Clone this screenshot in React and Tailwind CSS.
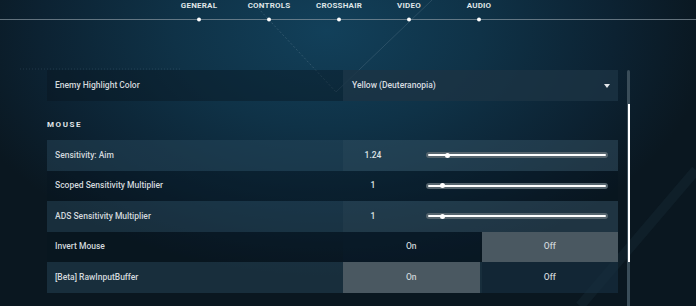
import React from "react";

const tabs = ["GENERAL", "CONTROLS", "CROSSHAIR", "VIDEO", "AUDIO"];

const Slider = ({ thumb }) => (
  <div className="relative ml-[23px] h-[6px] w-[182px] rounded-full bg-[#56656e] flex items-center px-[2px]">
    <div className="h-[2px] w-full rounded-full bg-white" />
    <div
      className="absolute top-[0.5px] size-[5px] rounded-full bg-white"
      style={{ left: thumb }}
    />
  </div>
);

const SliderRow = ({ label, value, thumb, light }) => (
  <div className={`flex h-[30.5px] ${light ? "bg-[#2b4b5f]/45" : "bg-[#061420]/35"}`}>
    <div className="w-[296px] flex items-center pl-[8px] text-[#d2d8dc]">{label}</div>
    <div className={`flex-1 flex items-center ${light ? "bg-white/[0.03]" : ""}`}>
      <span className="w-[60px] text-center text-[#dde2e5]">{value}</span>
      <Slider thumb={thumb} />
    </div>
  </div>
);

const ToggleRow = ({ label, on, light }) => (
  <div className={`flex h-[30.5px] ${light ? "bg-[#2b4b5f]/45" : "bg-[#061420]/35"}`}>
    <div className="w-[296px] flex items-center pl-[8px] text-[#d2d8dc]">{label}</div>
    <div className="flex-1 flex gap-[2px]">
      <div className={`flex-1 flex items-center justify-center text-[#ccd3d7] ${on ? "bg-[#4a5861]" : "bg-[#0a1c2a]/40"}`}>
        On
      </div>
      <div className={`flex-1 flex items-center justify-center text-[#ccd3d7] ${on ? "bg-[#0a1c2a]/40" : "bg-[#4a5861]"}`}>
        Off
      </div>
    </div>
  </div>
);

export default function App() {
  return (
    <div
      className="relative w-[696px] h-[306px] overflow-hidden text-[8.5px] font-medium bg-[radial-gradient(ellipse_55%_80%_at_47%_10%,#12405a_0%,#0f3247_40%,#0c2232_75%,#0a1720_100%)]"
      style={{ fontFamily: "Roboto, 'Liberation Sans', sans-serif" }}
    >
      {/* decorative lines behind */}
      <svg className="absolute inset-0 pointer-events-none" width="696" height="306">
        <line x1="258" y1="8" x2="336" y2="92" stroke="#7f98a8" strokeOpacity="0.35" strokeDasharray="2 2" strokeWidth="0.8" />
        <line x1="432" y1="0" x2="336" y2="92" stroke="#7f98a8" strokeOpacity="0.3" strokeWidth="0.8" />
        <line x1="20" y1="69" x2="180" y2="69" stroke="#7f98a8" strokeOpacity="0.25" strokeDasharray="1 2" strokeWidth="0.8" />
        <line x1="580" y1="306" x2="696" y2="170" stroke="#3d5b6d" strokeOpacity="0.12" strokeWidth="10" />
      </svg>

      <div className="relative flex h-[20px] border-b border-[#8796a0]/70 pl-[164px]">
        {tabs.map((t) => (
          <div key={t} className="w-[70px] flex flex-col items-center justify-between">
            <span className="mt-[1px] text-[8px] font-bold leading-[10px] text-[#dfe4e7] tracking-[0.2px]">{t}</span>
            <span className="size-[4px] translate-y-[2.5px] rounded-full bg-white" />
          </div>
        ))}
      </div>

      <div className="relative flex items-start pl-[47px] pt-[50px]">
        <div className="w-[571px] flex flex-col">
          <div className="flex h-[31px]">
            <div className="w-[296px] flex items-center pl-[8px] bg-[#07131d]/40 text-[#d2d8dc]">
              Enemy Highlight Color
            </div>
            <div className="flex-1 flex items-center justify-between pl-[9px] pr-[8px] bg-[#1c3344]/80 text-[#d8dde0]">
              <span>Yellow (Deuteranopia)</span>
              <svg width="6" height="4" viewBox="0 0 6 4">
                <path d="M0 0 H6 L3 4 Z" fill="#e3e7ea" />
              </svg>
            </div>
          </div>

          <div className="mt-[18px] mb-[9px] h-[12px] flex items-center font-bold text-[8px] tracking-[1.6px] text-[#e0e5e8]">
            MOUSE
          </div>

          <SliderRow label="Sensitivity: Aim" value="1.24" thumb={19} light />
          <SliderRow label="Scoped Sensitivity Multiplier" value="1" thumb={14} />
          <SliderRow label="ADS Sensitivity Multiplier" value="1" thumb={14} light />
          <ToggleRow label="Invert Mouse" on={false} />
          <ToggleRow label="[Beta] RawInputBuffer" on light />
        </div>

        <div className="ml-[9px] w-[3px] h-[250px] rounded-t-full bg-[#3a4d59] flex flex-col items-center">
          <div className="mt-[34px] h-[158px] w-[2px] bg-white" />
        </div>
      </div>
    </div>
  );
}
